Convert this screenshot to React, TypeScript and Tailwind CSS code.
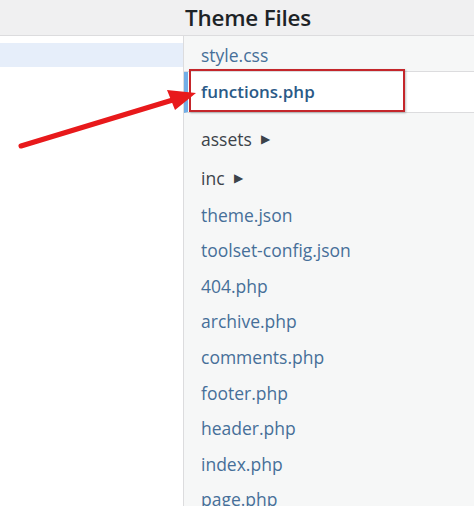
import React from 'react';

const files = [
  'theme.json',
  'toolset-config.json',
  '404.php',
  'archive.php',
  'comments.php',
  'footer.php',
  'header.php',
  'index.php',
  'page.php',
];

const Folder = ({ name, h }: { name: string; h: string }) => (
  <div className={`shrink-0 flex items-center pl-[17px] text-[#3c434a] text-[17.5px] ${h}`}>
    <span>{name}</span>
    <span className="ml-[9px] text-[12px] leading-none">▶</span>
  </div>
);

export default function App() {
  return (
    <div className="relative w-[474px] h-[506px] overflow-hidden bg-white" style={{ fontFamily: '"Open Sans", "Noto Sans", sans-serif' }}>
      {/* header */}
      <div className="h-[36px] bg-[#f0f0f1] border-b border-[#dcdcde] flex items-center">
        <h2 className="ml-[185px] text-[22.4px] font-semibold text-[#1d2327] tracking-[-0.2px]">Theme Files</h2>
      </div>

      <div className="flex h-[470px]">
        {/* left column */}
        <div className="w-[184px] shrink-0 border-r border-[#dcdcde] pt-[7px]">
          <div className="h-[24px] bg-[#e6eefa]" />
        </div>

        {/* file tree */}
        <div className="flex-1 bg-[#f6f7f7] flex flex-col overflow-hidden">
          <div className="shrink-0 h-[36px] border-b border-[#dcdcde] flex items-center pl-[17px] pt-[4px] text-[17.5px] text-[#466f99]">
            style.css
          </div>
          <div className="shrink-0 relative h-[41px] bg-white border-l-[4px] border-[#72aee6] border-b border-b-[#dcdcde] flex items-center pl-[13px] text-[17px] font-semibold text-[#2b5a87]">
            functions.php
            <div className="absolute left-[1px] top-[-3px] w-[216px] h-[43px] border-2 border-[#c4262b] shadow-[1px_1px_2px_rgba(0,0,0,0.25)]" />
          </div>
          <div className="shrink-0 h-[6px]" />
          <Folder name="assets" h="h-[40px]" />
          <Folder name="inc" h="h-[38px]" />
          {files.map(f => (
            <div key={f} className="h-[35.6px] shrink-0 flex items-center pl-[17px] text-[17.5px] text-[#466f99]">
              {f}
            </div>
          ))}
        </div>
      </div>

      {/* red arrow */}
      <svg className="absolute left-0 top-0 pointer-events-none" width="474" height="506">
        <line x1="21" y1="146" x2="176" y2="99" stroke="#e8191b" strokeWidth="5" strokeLinecap="round" />
        <polygon points="196,93 167,90 175,110" fill="#e8191b" />
      </svg>
    </div>
  );
}
